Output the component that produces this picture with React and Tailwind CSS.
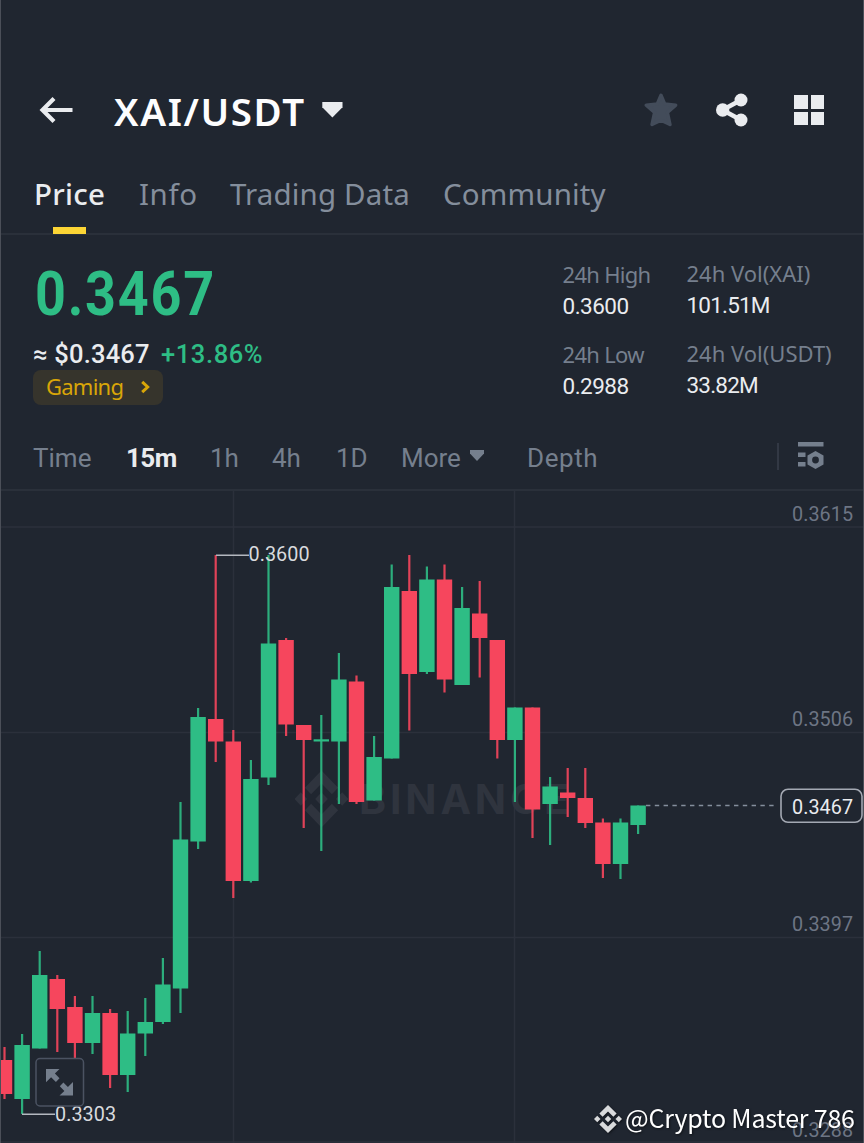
import React from "react";

const UP = "#2ebd85";
const DOWN = "#f6465d";
const PITCH = 17.6;

// direction, high, body top, body bottom, low
const CANDLES = [
  ["d", 1047, 1060, 1094, 1099],
  ["u", 1034, 1045, 1099, 1114],
  ["u", 951, 975, 1048.5, 1048.5],
  ["d", 975, 979, 1009, 1052],
  ["d", 996, 1007, 1043, 1058],
  ["u", 996, 1013, 1043, 1054],
  ["d", 1009, 1013, 1075, 1088],
  ["u", 1011, 1033.5, 1075, 1092],
  ["u", 998, 1022, 1033.5, 1056],
  ["u", 958, 984.5, 1022, 1024],
  ["u", 802, 839.5, 988.5, 1013],
  ["u", 708, 717, 841.5, 849],
  ["d", 555, 719, 741.5, 762],
  ["d", 730, 741.5, 881, 898],
  ["u", 760, 779, 881, 882.5],
  ["u", 555, 643.5, 777.5, 785],
  ["d", 638, 640, 724.5, 736],
  ["d", 725, 725, 740, 828],
  ["u", 715, 739.3, 741.5, 851],
  ["u", 653, 679.5, 741.5, 804],
  ["d", 675.5, 681.5, 802, 804],
  ["u", 736, 757, 800.5, 800.5],
  ["u", 564.5, 587, 758.5, 758.5],
  ["d", 555, 591, 674, 730.5],
  ["u", 566.5, 579.5, 672, 674],
  ["d", 564.5, 579.5, 679.5, 692.5],
  ["u", 587, 608, 685, 685],
  ["d", 581, 613.5, 638, 677.5],
  ["d", 640, 640, 740, 758.5],
  ["u", 707.5, 707.5, 740, 802],
  ["d", 707.5, 707.5, 809.5, 838],
  ["u", 777, 786.5, 804, 845],
  ["d", 768, 792.5, 798, 817],
  ["d", 768, 798, 823, 828],
  ["d", 818.5, 822.5, 864, 878],
  ["u", 818.5, 822.5, 864, 879],
  ["u", 805.5, 805.5, 825, 834],
];

const STATS = [
  ["24h High", "0.3600", "24h Vol(XAI)", "101.51M"],
  ["24h Low", "0.2988", "24h Vol(USDT)", "33.82M"],
];

const BinanceMark = (props) => (
  <svg viewBox="-12 -12 24 24" fill="currentColor" {...props}>
    <path d="M0-12 7.4-4.7 4.6-2 0-6.5-4.6-2-7.4-4.7Z" />
    <path d="M0 12 7.4 4.7 4.6 2 0 6.5-4.6 2-7.4 4.7Z" />
    <path d="M0-2.8 2.8 0 0 2.8-2.8 0Z" />
    <path d="M-9.2-2.8-6.4 0-9.2 2.8-12 0Z" />
    <path d="M9.2-2.8 12 0 9.2 2.8 6.4 0Z" />
  </svg>
);

function Header() {
  return (
    <header className="flex h-[80px] items-center pl-[39px] pr-[40px]">
      <svg className="h-[28px] w-[35px]" viewBox="0 0 35 28" fill="none" stroke="#eaecef" strokeWidth="4.2">
        <path d="M33.5 14H4M15 2.5 3.5 14 15 25.5" />
      </svg>
      <h1 className="ml-[40px] w-[192px] whitespace-nowrap pt-[2px] font-['Noto_Sans',sans-serif] text-[38.5px] font-semibold leading-none tracking-[1.6px] text-[#fdfdfe]">
        XAI/USDT
      </h1>
      <svg className="ml-[16px] h-[16px] w-[21px]" viewBox="0 0 21 16" fill="#eaecef">
        <path d="M.3 0h20.2v5.3L10.4 15.6.3 5.3Z" />
      </svg>
      <svg className="ml-auto h-[34px] w-[34px]" viewBox="0 0 34 34" fill="#434c5a" stroke="#434c5a" strokeWidth="3.4" strokeLinejoin="round">
        <path d="m17 2.2 3.7 8.8 11 1.1-8.3 7.3 2.6 12.1L17 27.2l-9 4.3 2.6-12.1-8.3-7.3 11-1.1Z" />
      </svg>
      <svg className="ml-[38px] h-[34px] w-[32px]" viewBox="0 0 32 34" fill="#eaecef">
        <circle cx="6.7" cy="17" r="6.7" />
        <circle cx="25" cy="7" r="6.5" />
        <circle cx="25" cy="27" r="6.5" />
        <path d="M25 7 6.5 17 25 27" fill="none" stroke="#eaecef" strokeWidth="4.5" />
      </svg>
      <div className="ml-[46px] grid grid-cols-2 gap-[3px]">
        <i className="h-[13.5px] w-[13.5px] bg-[#eaecef]" />
        <i className="h-[13.5px] w-[13.5px] bg-[#eaecef]" />
        <i className="h-[13.5px] w-[13.5px] bg-[#eaecef]" />
        <i className="h-[13.5px] w-[13.5px] bg-[#eaecef]" />
      </div>
    </header>
  );
}

function Tabs() {
  return (
    <nav className="flex h-[84.5px] whitespace-nowrap border-b-2 border-[#2a303a] pl-[34px] pt-[24px] font-['Noto_Sans',sans-serif] text-[29.5px] leading-[40px] tracking-[0.15px] text-[#848e9c]">
      <div className="relative w-[105px] font-medium tracking-[0.3px] text-[#eaecef]">
        Price
        <span className="absolute left-[19px] top-[52.5px] h-[7px] w-[33px] bg-[#fcd535]" />
      </div>
      <span className="w-[91px] tracking-[0.6px]">Info</span>
      <span className="w-[213px]">Trading Data</span>
      <span>Community</span>
    </nav>
  );
}

function Summary() {
  return (
    <section className="flex h-[196px] justify-between pl-[33px] pr-[31px]">
      <div className="flex w-[300px] flex-col whitespace-nowrap font-[Roboto,sans-serif]">
        <div className="ml-[2px] mt-[28px] h-[62px] origin-left scale-x-[0.87] text-[62px] font-bold leading-[62px] tracking-[2px] text-[#2ebd85]">
          0.3467
        </div>
        <div className="mt-[14px] flex h-[30px] text-[25.5px] font-medium leading-[30px]">
          <span className="w-[128px] tracking-[0.2px] text-[#eaecef]">≈ $0.3467</span>
          <span className="tracking-[0.6px] text-[#2ebd85]">+13.86%</span>
        </div>
        <div className="mt-px flex h-[35px] w-[130px] items-center rounded-[8px] bg-[#36342c] pl-[13px] pr-[13px] font-['Noto_Sans',sans-serif] text-[22px] leading-none tracking-[-0.75px] text-[#d9a608]">
          <span className="pb-[2px]">Gaming</span>
          <svg className="ml-auto h-[14px] w-[9px]" viewBox="0 0 9 14" fill="none" stroke="#d9a608" strokeWidth="3">
            <path d="m1.2 1.8 5.5 5.2-5.5 5.2" />
          </svg>
        </div>
      </div>
      <div className="mt-[24px] grid h-[142px] w-[270.5px] grid-cols-[124px_1fr] grid-rows-[80px_1fr] whitespace-nowrap">
        {STATS.map(([rangeLabel, rangeValue, volLabel, volValue]) => (
          <React.Fragment key={rangeLabel}>
            <div className="pt-px">
              <div className="h-[29px] font-['Noto_Sans',sans-serif] text-[22px] leading-[29px] tracking-[-0.7px] text-[#757f8d]">{rangeLabel}</div>
              <div className="h-[32px] font-[Roboto,sans-serif] text-[22.5px] leading-[34px] tracking-[-0.5px] text-[#eaecef]">{rangeValue}</div>
            </div>
            <div>
              <div className="h-[29px] font-['Noto_Sans',sans-serif] text-[22px] leading-[29px] text-[#757f8d]">{volLabel}</div>
              <div className="h-[32px] font-[Roboto,sans-serif] text-[22.5px] leading-[34px] tracking-[-0.8px] text-[#eaecef]">{volValue}</div>
            </div>
          </React.Fragment>
        ))}
      </div>
    </section>
  );
}

function Intervals() {
  return (
    <div className="flex h-[60.5px] items-center whitespace-nowrap border-b-2 border-[#2a303a] pb-[3px] pl-[33px] pr-[40px] font-[Roboto,sans-serif] text-[26px] leading-none text-[#757f8d]">
      <span className="w-[93px]">Time</span>
      <span className="w-[84px] font-bold tracking-[-0.6px] text-[#eaecef]">15m</span>
      <span className="w-[62px]">1h</span>
      <span className="w-[64px]">4h</span>
      <span className="w-[65px]">1D</span>
      <span className="w-[69px]">More</span>
      <svg className="mb-[6px] h-[11px] w-[14px]" viewBox="0 0 14 11" fill="#757f8d">
        <path d="M0 0h14v3.5L7 11 0 3.5Z" />
      </svg>
      <span className="ml-[43px] tracking-[0.6px]">Depth</span>
      <i className="mb-[4px] ml-auto h-[27px] w-[2px] bg-[#323844]" />
      <svg className="mb-[6px] ml-[19px] h-[28px] w-[26px]" viewBox="0 0 26 28">
        <path d="M0 1h25.5v4.5H0zM0 11.5h7.5V16H0zM0 21h7.5v4.5H0z" fill="#757f8d" />
        <path d="m17.5 10 8 4.500v9l-8 4.500-8-4.500v-9Z" fill="#757f8d" />
        <circle cx="17.5" cy="19" r="3.4" fill="#202630" />
      </svg>
    </div>
  );
}

function Chart() {
  return (
    <svg className="block h-[652px] w-[864px]" viewBox="0 491 864 652">
      <g stroke="#2b303b" strokeWidth="1.5">
        <path d="M0 527H864M0 732.5H864M0 937.5H864M0 1142H864M233.5 491V1143M514.5 491V1143" />
      </g>
      <g color="#2f343e">
        <BinanceMark x="294.5" y="770.5" width="54" height="57" preserveAspectRatio="none" />
        <text x="359" y="813.5" fill="currentColor" className="font-[Inter,sans-serif] text-[41px] font-bold" textLength="210">
          BINANCE
        </text>
      </g>
      {CANDLES.map(([dir, high, top, bottom, low], i) => {
        const x = 4.5 + i * PITCH;
        return (
          <g key={i} fill={dir === "u" ? UP : DOWN}>
            <rect x={x - 1.1} y={high} width="2.2" height={low - high} opacity="0.9" />
            <rect x={x - 7.7} y={top} width="15.4" height={bottom - top} />
          </g>
        );
      })}
      <path d="M216 555.2H249M22 1114.2H55" stroke="#b4b8bf" strokeWidth="1.5" />
      <path d="M646 805.5H774" stroke="#848e9c" strokeWidth="1.6" strokeDasharray="4.4 4.4" />
      <g className="font-[Roboto,sans-serif] text-[19.8px]" fill="#d8dade">
        <text x="248.5" y="560.5" textLength="61">0.3600</text>
        <text x="55" y="1120.5" textLength="61">0.3303</text>
      </g>
      <g className="font-[Roboto,sans-serif] text-[19.8px]" fill="#6d7584">
        <text x="792" y="520.5" textLength="61">0.3615</text>
        <text x="792" y="726" textLength="61">0.3506</text>
        <text x="792" y="931" textLength="61">0.3397</text>
        <text x="792" y="1136.5" textLength="61">0.3288</text>
      </g>
      <rect x="781" y="789.3" width="81" height="33" rx="7" fill="#202630" stroke="#a4a9b3" strokeWidth="1.6" />
      <text x="792" y="813.5" textLength="61" fill="#eaecef" className="font-[Roboto,sans-serif] text-[19.8px]">0.3467</text>
      <rect x="36" y="1058.5" width="47.5" height="47.5" rx="4" fill="#202630" stroke="#4b5362" strokeWidth="1.5" />
      <g fill="#757f8d">
        <path d="M46 1069h13.5l-4.6 4.6 4.6 4.7-3.6 3.6-4.8-4.6-5.1 5Z" />
        <path d="M73 1095.5H59.500l4.900-4.600-4.600-4.700 3.600-3.600 4.500 4.500 5.100-5Z" />
      </g>
      <g className="drop-shadow-[1px_1px_1px_rgba(0,0,0,0.5)]">
        <BinanceMark x="594" y="1105" width="28" height="28" color="#d9dadc" />
        <text x="625" y="1128" textLength="230" fill="#fff" className="font-['Noto_Sans_CJK_SC',sans-serif] text-[25px] font-normal">
          @Crypto Master 786
        </text>
      </g>
    </svg>
  );
}

export default function App() {
  return (
    <main className="relative h-[1143px] w-[864px] overflow-hidden bg-[#202630] pt-[70px]">
      <Header />
      <Tabs />
      <Summary />
      <Intervals />
      <Chart />
      <span className="absolute inset-y-0 left-0 w-px bg-[#4b4f58]" />
      <span className="absolute inset-y-0 right-0 w-px bg-[#4b4f58]" />
    </main>
  );
}
